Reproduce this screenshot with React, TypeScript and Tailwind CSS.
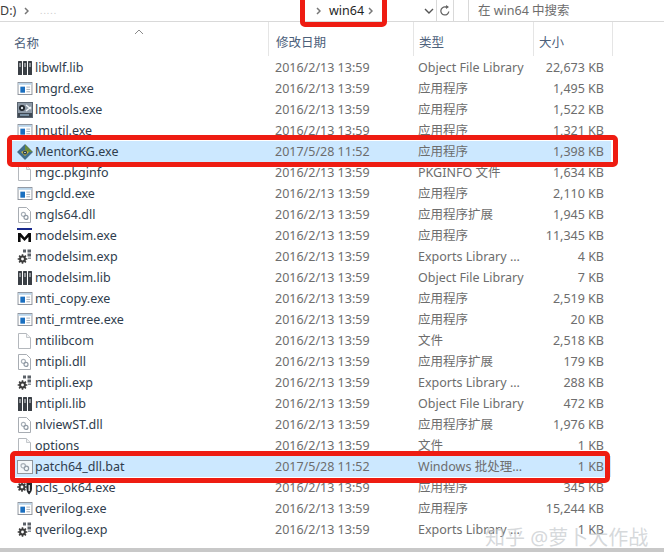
import React from "react";

const font = { fontFamily: '"Noto Sans", "Noto Sans CJK SC", sans-serif' };

type Kind = "lib" | "exe" | "tools" | "mentor" | "blank" | "dll" | "model" | "exp" | "bat" | "pcls";

const files: { name: string; date: string; type: string; size: string; icon: Kind; selected?: boolean }[] = [
  { name: "libwlf.lib", date: "2016/2/13 13:59", type: "Object File Library", size: "22,673 KB", icon: "lib" },
  { name: "lmgrd.exe", date: "2016/2/13 13:59", type: "应用程序", size: "1,495 KB", icon: "exe" },
  { name: "lmtools.exe", date: "2016/2/13 13:59", type: "应用程序", size: "1,522 KB", icon: "tools" },
  { name: "lmutil.exe", date: "2016/2/13 13:59", type: "应用程序", size: "1,321 KB", icon: "exe" },
  { name: "MentorKG.exe", date: "2017/5/28 11:52", type: "应用程序", size: "1,398 KB", icon: "mentor", selected: true },
  { name: "mgc.pkginfo", date: "2016/2/13 13:59", type: "PKGINFO 文件", size: "1,634 KB", icon: "blank" },
  { name: "mgcld.exe", date: "2016/2/13 13:59", type: "应用程序", size: "2,110 KB", icon: "exe" },
  { name: "mgls64.dll", date: "2016/2/13 13:59", type: "应用程序扩展", size: "1,945 KB", icon: "dll" },
  { name: "modelsim.exe", date: "2016/2/13 13:59", type: "应用程序", size: "11,345 KB", icon: "model" },
  { name: "modelsim.exp", date: "2016/2/13 13:59", type: "Exports Library ...", size: "4 KB", icon: "exp" },
  { name: "modelsim.lib", date: "2016/2/13 13:59", type: "Object File Library", size: "7 KB", icon: "lib" },
  { name: "mti_copy.exe", date: "2016/2/13 13:59", type: "应用程序", size: "2,519 KB", icon: "exe" },
  { name: "mti_rmtree.exe", date: "2016/2/13 13:59", type: "应用程序", size: "20 KB", icon: "exe" },
  { name: "mtilibcom", date: "2016/2/13 13:59", type: "文件", size: "2,518 KB", icon: "blank" },
  { name: "mtipli.dll", date: "2016/2/13 13:59", type: "应用程序扩展", size: "179 KB", icon: "dll" },
  { name: "mtipli.exp", date: "2016/2/13 13:59", type: "Exports Library ...", size: "288 KB", icon: "exp" },
  { name: "mtipli.lib", date: "2016/2/13 13:59", type: "Object File Library", size: "472 KB", icon: "lib" },
  { name: "nlviewST.dll", date: "2016/2/13 13:59", type: "应用程序扩展", size: "1,976 KB", icon: "dll" },
  { name: "options", date: "2016/2/13 13:59", type: "文件", size: "1 KB", icon: "blank" },
  { name: "patch64_dll.bat", date: "2017/5/28 11:52", type: "Windows 批处理...", size: "1 KB", icon: "bat", selected: true },
  { name: "pcls_ok64.exe", date: "2016/2/13 13:59", type: "应用程序", size: "345 KB", icon: "pcls" },
  { name: "qverilog.exe", date: "2016/2/13 13:59", type: "应用程序", size: "15,244 KB", icon: "exe" },
  { name: "qverilog.exp", date: "2016/2/13 13:59", type: "Exports Library ...", size: "1 KB", icon: "exp" },
];

function Gear({ x, y, r }: { x: number; y: number; r: number }) {
  return (
    <g>
      <circle cx={x} cy={y} r={r} fill="#3c3c3c" />
      <path
        d={`M${x - r - 1.4} ${y}H${x + r + 1.4}M${x} ${y - r - 1.4}V${y + r + 1.4}M${x - r} ${y - r}L${x + r} ${y + r}M${x + r} ${y - r}L${x - r} ${y + r}`}
        stroke="#3c3c3c"
        strokeWidth="1.6"
      />
      <circle cx={x} cy={y} r={r * 0.42} fill="#fff" />
    </g>
  );
}

function FileIcon({ kind }: { kind: Kind }) {
  if (kind === "lib") {
    return (
      <svg width="14" height="15" viewBox="0 0 14 15">
        <rect x="0" y="1" width="4" height="14" rx="0.5" fill="#3a3f45" />
        <rect x="5" y="1" width="4" height="14" rx="0.5" fill="#3a3f45" />
        <rect x="10" y="1" width="4" height="14" rx="0.5" fill="#3a3f45" />
        <path d="M1 4h2M6 4h2M11 4h2M1 6h2M6 6h2M11 6h2" stroke="#e6e9eb" strokeWidth="1" />
      </svg>
    );
  }
  if (kind === "exe") {
    return (
      <svg width="16" height="13" viewBox="0 0 16 14">
        <rect x="0.5" y="0.5" width="15" height="13" fill="#fff" stroke="#8a9099" />
        <rect x="1" y="1" width="14" height="2" fill="#b9d4ea" />
        <rect x="3" y="5" width="5" height="6.5" fill="#1a6fc0" />
        <path d="M9.500 5.500h4M9.500 8h4M9.500 10.500h4" stroke="#a3abb5" />
      </svg>
    );
  }
  if (kind === "tools") {
    return (
      <svg width="16" height="16" viewBox="0 0 16 16">
        <rect x="0.5" y="0.5" width="15" height="15" fill="#8d99a6" stroke="#5b6570" />
        <rect x="1" y="11" width="14" height="4" fill="#3e4852" />
        <circle cx="5" cy="6" r="3" fill="#20262c" />
        <circle cx="5" cy="6" r="1.2" fill="#dfe5ea" />
        <path d="M9 3l5 4M9 9l5-4" stroke="#eef2f5" strokeWidth="1.5" />
        <path d="M3 13h9" stroke="#9fc0d8" strokeWidth="1.2" />
      </svg>
    );
  }
  if (kind === "mentor") {
    return (
      <svg width="16" height="16" viewBox="0 0 16 16">
        <path d="M8 0.5L15.5 8 8 15.5 0.5 8z" fill="#3f6f8f" stroke="#24465e" strokeWidth="0.6" />
        <path d="M8 0.5L15.5 8H8z" fill="#6b8c3a" />
        <path d="M4 8l4 4 4-4-4-2z" fill="#c8b23c" />
        <circle cx="8" cy="8.5" r="2" fill="#17364a" />
        <circle cx="8" cy="8.5" r="0.8" fill="#e7edf0" />
      </svg>
    );
  }
  if (kind === "blank") {
    return (
      <svg width="13" height="16" viewBox="0 0 13 16">
        <path d="M0.5 0.5H8.5L12.5 4.5V15.5H0.5z" fill="#fff" stroke="#b4b8bd" />
        <path d="M8.5 0.5V4.5H12.5" fill="#f1f2f3" stroke="#c4c8cc" />
      </svg>
    );
  }
  if (kind === "dll") {
    return (
      <svg width="13" height="16" viewBox="0 0 13 16">
        <path d="M0.5 0.5H8.5L12.5 4.5V15.5H0.5z" fill="#fff" stroke="#a8adb3" />
        <circle cx="5.4" cy="7.4" r="2" fill="none" stroke="#a9b1b9" strokeWidth="1.2" />
        <circle cx="8" cy="10.4" r="2" fill="none" stroke="#8f99a3" strokeWidth="1.2" />
      </svg>
    );
  }
  if (kind === "model") {
    return (
      <svg width="15" height="15" viewBox="0 0 15 15">
        <rect x="0" y="0" width="15" height="2" fill="#1a2a8c" />
        <path d="M1 14V5H3.6L7.5 9.6 11.4 5H14V14H11.4V9L7.5 13 3.6 9V14z" fill="#0c0c0c" />
      </svg>
    );
  }
  if (kind === "exp") {
    return (
      <svg width="15" height="15" viewBox="0 0 15 15">
        <Gear x={5.5} y={10} r={3.4} />
        <rect x="6" y="0.5" width="3" height="3" fill="#5b6168" />
        <rect x="10.5" y="0.5" width="3.5" height="3" fill="#5b6168" />
        <rect x="10.5" y="4.5" width="3.5" height="3" fill="#5b6168" />
        <rect x="11" y="8.5" width="3" height="1.5" fill="#8d939a" />
      </svg>
    );
  }
  if (kind === "bat") {
    return (
      <svg width="16" height="14" viewBox="0 0 16 14">
        <rect x="0.5" y="0.5" width="15" height="13" fill="#f4f7f9" stroke="#8f969d" />
        <circle cx="6.2" cy="5.8" r="2.2" fill="none" stroke="#a9b1b9" strokeWidth="1.2" />
        <circle cx="9.4" cy="8.4" r="2.2" fill="none" stroke="#8f99a3" strokeWidth="1.2" />
      </svg>
    );
  }
  return (
    <svg width="16" height="15" viewBox="0 0 16 15">
      <Gear x={5} y={7} r={3.4} />
      <path d="M9.5 3h5.5v6c0 3-2.5 4.500-2.800 5.500-1-1-2.700-2.500-2.700-5.500z" fill="#24282c" />
      <path d="M12.200 5v6" stroke="#fff" strokeWidth="1.2" />
    </svg>
  );
}

function Chevron({ className }: { className: string }) {
  return (
    <svg width="5" height="8" viewBox="0 0 5 8" className={`shrink-0 ${className}`}>
      <path d="M1 1l3 3-3 3" fill="none" stroke="#777777" strokeWidth="1.5" />
    </svg>
  );
}

function Highlight({ className }: { className: string }) {
  return <div className={`absolute border-[5px] border-[#ee1c12] rounded-[5px] ${className}`} />;
}

export default function App() {
  return (
    <div className="relative w-[664px] h-[552px] overflow-hidden bg-white text-[12.5px] leading-[21px]" style={font}>
      {/* Address bar */}
      <div className="flex items-center h-[22px] border-b border-[#d9d9d9] text-[#3c3c3c]">
        <span className="w-[24px] shrink-0 whitespace-nowrap">D:)</span>
        <Chevron className="" />
        <span className="ml-[11px] w-[276px] shrink-0 text-[#c8c8c8] text-[9px] tracking-[1px]">.....</span>
        <Chevron className="" />
        <span className="ml-[8px] w-[39px] shrink-0 text-[#1f1f1f]">win64</span>
        <Chevron className="" />
        <div className="w-[50px] shrink-0" />
        <svg width="12" height="8" viewBox="0 0 12 8" className="shrink-0">
          <path d="M2 2l4 4 4-4" fill="none" stroke="#555555" strokeWidth="1.4" />
        </svg>
        <div className="flex items-center justify-center ml-[1px] w-[18px] h-[21px] border-x border-[#d9d9d9] shrink-0">
          <svg width="12" height="12" viewBox="0 0 12 12">
            <path d="M9.800 6.500A4 4 0 1 1 6.500 2H9" fill="none" stroke="#666666" strokeWidth="1.3" />
            <path d="M7 0v4l3-2z" fill="#666666" />
          </svg>
        </div>
        <div className="ml-[14px] flex-1 h-[21px] border-l border-[#d9d9d9] pl-[9px] text-[#6d6d6d] whitespace-nowrap">在 win64 中搜索</div>
      </div>

      {/* Column header */}
      <div className="relative flex h-[34px] items-center text-[#4c607a]">
        <div className="w-[268px] pl-[14px] pt-[8px] shrink-0">名称</div>
        <div className="w-[145px] h-full pl-[7px] pt-[6px] shrink-0 border-l border-[#e5e5e5] flex items-center">修改日期</div>
        <div className="w-[120px] h-full pl-[5px] pt-[6px] shrink-0 border-l border-[#e5e5e5] flex items-center">类型</div>
        <div className="w-[80px] h-full pl-[5px] pt-[6px] shrink-0 border-x border-[#e5e5e5] flex items-center">大小</div>
        <svg width="10" height="6" viewBox="0 0 10 6" className="absolute left-[134px] top-[7px]">
          <path d="M1 5l4-4 4 4" fill="none" stroke="#8a8a8a" />
        </svg>
      </div>

      {/* File rows */}
      <div className="mt-[1px]">
        {files.map((f) => (
          <div key={f.name} className={`flex h-[21px] items-center ml-[11px] w-[600px] ${f.selected ? "bg-[#cce8ff]" : ""}`}>
            <div className="w-[21px] ml-[3px] shrink-0 flex justify-center">
              <FileIcon kind={f.icon} />
            </div>
            <div className="w-[240px] shrink-0 text-[#2f3d4d]">{f.name}</div>
            <div className="w-[143px] shrink-0 text-[#6d6d6d]">{f.date}</div>
            <div className="w-[126px] shrink-0 text-[#6d6d6d] whitespace-nowrap">{f.type}</div>
            <div className="w-[60px] shrink-0 text-right text-[#6d6d6d] whitespace-nowrap">{f.size}</div>
          </div>
        ))}
      </div>

      {/* Window bottom edge */}
      <div className="absolute left-0 right-0 bottom-0 h-[4px] bg-[#c8c8c8]" />

      {/* Red annotations */}
      <Highlight className="left-[300px] -top-[6px] w-[87px] h-[33px]" />
      <Highlight className="left-[7px] top-[135px] w-[611px] h-[32px]" />
      <Highlight className="left-[10px] top-[451px] w-[600px] h-[32px]" />

      {/* Watermark */}
      <div className="absolute left-[485px] top-[526px] text-[20px] leading-[24px] text-[#c4c8cc]/70 whitespace-nowrap">知乎 @萝卜大作战</div>
    </div>
  );
}
